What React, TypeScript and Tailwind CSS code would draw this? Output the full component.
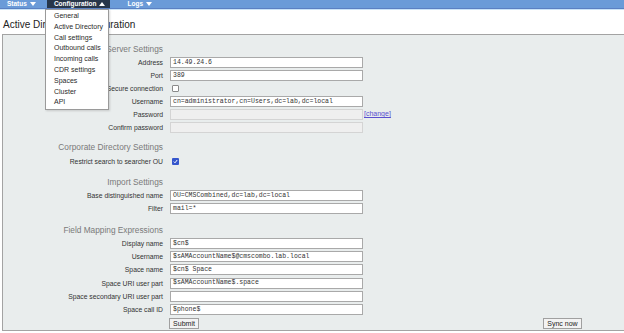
const menuItems = [
  "General",
  "Active Directory",
  "Call settings",
  "Outbound calls",
  "Incoming calls",
  "CDR settings",
  "Spaces",
  "Cluster",
  "API",
];

function Caret({ up }: { up?: boolean }) {
  return (
    <svg width="6" height="4" viewBox="0 0 6 4" className="shrink-0">
      {up ? <path d="M0 4 L3 0 L6 4 Z" fill="white" /> : <path d="M0 0 L6 0 L3 4 Z" fill="white" />}
    </svg>
  );
}

function Heading({ children }: { children: React.ReactNode }) {
  return (
    <div className="flex h-[12px] items-center">
      <div className="w-[160px] whitespace-nowrap text-right text-[8.3px] leading-[12px] text-[#7a7a7a]">{children}</div>
    </div>
  );
}

function Label({ children }: { children: React.ReactNode }) {
  return <div className="w-[160px] shrink-0 whitespace-nowrap text-right text-[6.8px] leading-[9px] text-[#333]">{children}</div>;
}

function Field({
  label,
  value = "",
  disabled,
  tall,
  extra,
}: {
  label: string;
  value?: string;
  disabled?: boolean;
  tall?: boolean;
  extra?: React.ReactNode;
}) {
  return (
    <div className={`flex items-center gap-[7px] ${tall ? "h-[13.2px]" : "h-[13px]"}`}>
      <Label>{label}</Label>
      <div
        className={`flex h-[11px] w-[193px] items-center border px-[2px] font-['Liberation_Mono',monospace] text-[6.5px] text-[#333] ${
          disabled ? "border-[#d4d4d4] bg-[#efefef]" : "border-[#a9a9a9] bg-white"
        }`}
      >
        {value}
      </div>
      {extra}
    </div>
  );
}

function Check({ label, checked }: { label: string; checked?: boolean }) {
  return (
    <div className="flex h-[13px] items-center gap-[7px]">
      <Label>{label}</Label>
      {checked ? (
        <div className="ml-[2px] flex h-[7px] w-[7px] items-center justify-center rounded-[1px] bg-[#3556cc]">
          <svg width="5" height="5" viewBox="0 0 5 5">
            <path d="M0.8 2.6 L2 3.8 L4.2 1" stroke="white" strokeWidth="1" fill="none" />
          </svg>
        </div>
      ) : (
        <div className="ml-[2px] h-[7px] w-[7px] rounded-[1px] border border-[#8a8a8a] bg-white" />
      )}
    </div>
  );
}

export default function App() {
  return (
    <div className="relative h-[333px] w-[624px] overflow-hidden bg-white font-['Liberation_Sans',Arial,sans-serif]">
      {/* Top nav */}
      <div className="flex h-[9px] items-stretch border-b border-[#5a80c2] bg-[#6a9bd8] text-[6.5px] font-bold leading-[8px] text-white">
        <div className="flex items-center gap-[3px] pl-[7px]">
          <span>Status</span>
          <Caret />
        </div>
        <div className="ml-[11px] flex items-center gap-[3px] bg-[#27364a] pl-[7px] pr-[5px]">
          <span>Configuration</span>
          <Caret up />
        </div>
        <div className="ml-[17px] flex items-center gap-[3px]">
          <span>Logs</span>
          <Caret />
        </div>
      </div>
      <div className="h-[1px] bg-[#c9e3f7]" />

      {/* Title */}
      <div className="h-[24px] pl-[3px] pt-[9px] text-[10px] leading-[12px] text-[#222]">Active Directory Configuration</div>

      {/* Form panel */}
      <div className="ml-[2px] border-b border-l border-t border-[#a3a3a3] bg-[#e9eded] pt-[8px]">
        <Heading>Server Settings</Heading>
        <div className="mt-[1px]">
          <Field label="Address" value="14.49.24.6" />
          <Field label="Port" value="389" />
          <Check label="Secure connection" />
          <Field label="Username" value="cn=administrator,cn=Users,dc=lab,dc=local" />
          <Field
            label="Password"
            disabled
            extra={<span className="-ml-[6px] text-[7px] text-[#5a4fcf] underline">[change]</span>}
          />
          <Field label="Confirm password" disabled />
        </div>

        <div className="mt-[7px]">
          <Heading>Corporate Directory Settings</Heading>
        </div>
        <div className="mt-[2px]">
          <Check label="Restrict search to searcher OU" checked />
        </div>

        <div className="mt-[8px]">
          <Heading>Import Settings</Heading>
        </div>
        <div className="mt-[1px]">
          <Field label="Base distinguished name" value="OU=CMSCombined,dc=lab,dc=local" />
          <Field label="Filter" value="mail=*" />
        </div>

        <div className="mt-[9px]">
          <Heading>Field Mapping Expressions</Heading>
        </div>
        <div className="mt-[1px]">
          <Field tall label="Display name" value="$cn$" />
          <Field tall label="Username" value="$sAMAccountName$@cmscombo.lab.local" />
          <Field tall label="Space name" value="$cn$ Space" />
          <Field tall label="Space URI user part" value="$sAMAccountName$.space" />
          <Field tall label="Space secondary URI user part" />
          <Field tall label="Space call ID" value="$phone$" />
        </div>

        <div className="mt-[2px] flex h-[12px] items-start pb-[1px]">
          <div className="w-[160px] shrink-0" />
          <button className="ml-[6px] h-[11px] w-[30px] border border-[#a0a0a0] bg-[#f3f3f3] text-[7px] leading-[9px] text-[#222]">
            Submit
          </button>
          <div className="flex-1" />
          <button className="mr-[42px] h-[11px] w-[39px] border border-[#a0a0a0] bg-[#f3f3f3] text-[7px] leading-[9px] text-[#222]">
            Sync now
          </button>
        </div>
      </div>

      {/* Configuration dropdown */}
      <div className="absolute left-[45px] top-[9px] w-[64px] border border-[#9a9a9a] bg-white pb-[1px] pl-[8px] pt-[1px] text-[7px] leading-[10.8px] text-[#2a2a2a] shadow-[1px_1px_2px_rgba(0,0,0,0.15)]">
        {menuItems.map((item) => (
          <div key={item} className="whitespace-nowrap">
            {item}
          </div>
        ))}
      </div>
    </div>
  );
}
